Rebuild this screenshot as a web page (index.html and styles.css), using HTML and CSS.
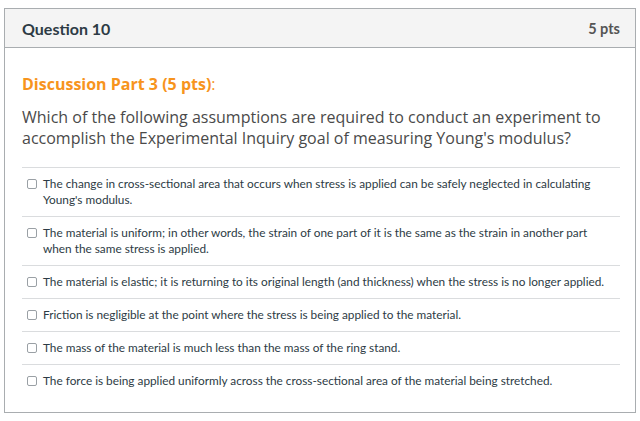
FILE: index.html
```html
<!DOCTYPE html>
<html lang="en">
<head>
  <meta charset="UTF-8">
  <title>Question 10</title>
  <link rel="stylesheet" href="styles.css">
</head>
<body>
  <div class="question">
    <div class="question-header">
      <span class="question-name">Question 10</span>
      <span class="question-points">5 pts</span>
    </div>
    <div class="question-body">
      <p class="question-text">
        <strong class="part">Discussion Part 3 (5 pts)</strong><span class="part-colon">:</span><br>
        Which of the following assumptions are required to conduct an experiment to accomplish the Experimental Inquiry goal of measuring Young's modulus?
      </p>
      <div class="answers">
        <label class="answer"><span class="box"></span><span class="answer-text">The change in cross-sectional area that occurs when stress is applied can be safely neglected in calculating Young's modulus.</span></label>
        <label class="answer"><span class="box"></span><span class="answer-text">The material is uniform; in other words, the strain of one part of it is the same as the strain in another part when the same stress is applied.</span></label>
        <label class="answer"><span class="box"></span><span class="answer-text">The material is elastic; it is returning to its original length (and thickness) when the stress is no longer applied.</span></label>
        <label class="answer"><span class="box"></span><span class="answer-text">Friction is negligible at the point where the stress is being applied to the material.</span></label>
        <label class="answer"><span class="box"></span><span class="answer-text">The mass of the material is much less than the mass of the ring stand.</span></label>
        <label class="answer"><span class="box"></span><span class="answer-text">The force is being applied uniformly across the cross-sectional area of the material being stretched.</span></label>
      </div>
    </div>
  </div>
</body>
</html>
```

FILE: styles.css
```css
body {
  margin: 0;
  padding: 8px 4px;
  background: #fff;
  font-family: Lato, "Open Sans", sans-serif;
  color: #2d3b45;
}
.question {
  border: 1px solid #a9adb0;
}
.question-header {
  display: flex;
  justify-content: space-between;
  align-items: center;
  height: 38px;
  padding: 0 15px 0 17px;
  background: #f4f4f4;
  border-bottom: 1px solid #a9adb0;
  font-weight: bold;
}
.question-name {
  font-size: 16px;
  color: #2d3b45;
}
.question-points {
  font-size: 14.5px;
  color: #555;
}
.question-body {
  padding: 26px 15px 15px 17px;
}
.question-text {
  margin: 0 0 18px;
  font-family: "Open Sans", sans-serif;
  font-size: 16px;
  line-height: 21px;
  color: #4a4a4a;
}
.part {
  display: inline-block;
  margin-bottom: 12px;
  color: #f7941d;
}
.part-colon {
  color: #f7941d;
}
.answers {
  display: flex;
  flex-direction: column;
}
.answer {
  display: flex;
  align-items: flex-start;
  gap: 6px;
  padding: 8px 10px 8px 5px;
  border-top: 1px solid #dadcde;
  font-size: 11.8px;
  line-height: 16px;
  color: #2d3b45;
}
.box {
  flex: none;
  width: 8px;
  height: 8px;
  margin-top: 3px;
  border: 1px solid #9aa0a5;
  border-radius: 2px;
  background: #fff;
}
```
